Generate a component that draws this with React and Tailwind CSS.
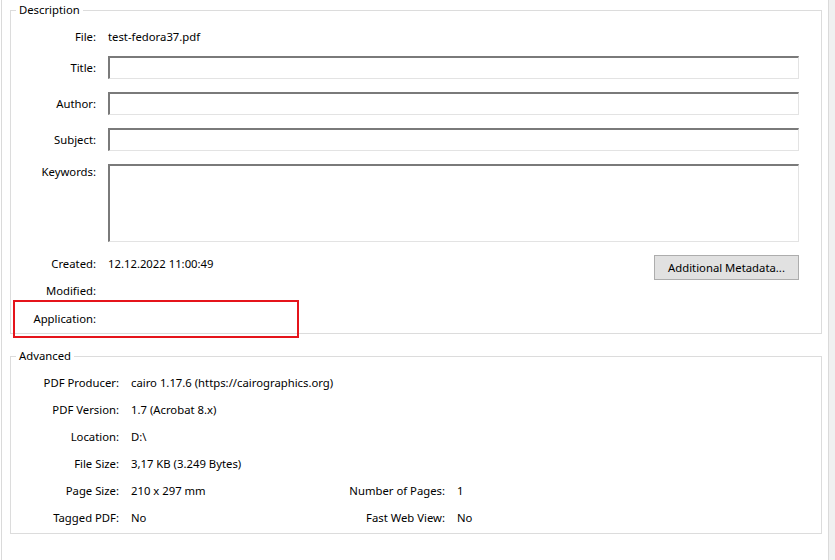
import React from 'react';

const font = { fontFamily: '"Noto Sans", "Liberation Sans", sans-serif' };

const Field = ({ tall }) => (
    <div className={`flex-1 bg-white border-t-2 border-l-2 border-t-[#7a7a7a] border-l-[#7a7a7a] border-b border-r border-b-[#e3e3e3] border-r-[#e3e3e3] ${tall ? 'h-[78px]' : 'h-[23px]'}`} />
);

const InputRow = ({ label, mt, tall }) => (
    <div className={`flex ${tall ? 'items-start' : 'items-center'} ${mt}`}>
        <span className="w-[85px] text-right">{label}</span>
        <div className="ml-[12px] mr-[22px] flex flex-1">
            <Field tall={tall} />
        </div>
    </div>
);

const InfoRow = ({ label, value, label2, value2 }) => (
    <div className="flex items-center h-[27px]">
        <span className="w-[108px] text-right">{label}</span>
        <span className={`ml-[12px] ${label2 ? 'w-[169px]' : ''}`}>{value}</span>
        {label2 && (
            <>
                <span className="w-[145px] text-right">{label2}</span>
                <span className="ml-[12px]">{value2}</span>
            </>
        )}
    </div>
);

const App = () => {
    return (
        <div className="flex w-[835px] h-[560px] bg-white text-[11.3px] leading-[16px] text-black" style={font}>
            <div className="relative ml-[1px] w-[828px] h-full border-x border-[#dadada] bg-white">
                {/* description group */}
                <fieldset className="mt-[2px] ml-[8px] mr-[6px] border border-[#dcdcdc] pb-[6px]">
                    <legend className="ml-[5px] px-[3px]">Description</legend>

                    <div className="flex items-center mt-[11px]">
                        <span className="w-[85px] text-right">File:</span>
                        <span className="ml-[12px]">test-fedora37.pdf</span>
                    </div>
                    <InputRow label="Title:" mt="mt-[11px]" />
                    <InputRow label="Author:" mt="mt-[13px]" />
                    <InputRow label="Subject:" mt="mt-[13px]" />
                    <InputRow label="Keywords:" mt="mt-[13px]" tall />

                    <div className="flex mt-[14px]">
                        <div className="flex flex-col">
                            <span className="w-[85px] text-right">Created:</span>
                            <span className="w-[85px] text-right mt-[11px]">Modified:</span>
                            <span className="w-[85px] text-right mt-[12px]">Application:</span>
                        </div>
                        <span className="ml-[12px]">12.12.2022 11:00:49</span>
                        <button className="ml-auto mr-[22px] -mt-px h-[25px] w-[145px] bg-[#e1e1e1] border border-[#adadad] text-[11.3px]">
                            Additional Metadata...
                        </button>
                    </div>
                </fieldset>

                {/* advanced group */}
                <fieldset className="mt-[14px] ml-[8px] mr-[6px] border border-[#dcdcdc] pt-[5px] pb-[2px]">
                    <legend className="ml-[5px] px-[3px]">Advanced</legend>
                    <InfoRow label="PDF Producer:" value="cairo 1.17.6 (https://cairographics.org)" />
                    <InfoRow label="PDF Version:" value="1.7 (Acrobat 8.x)" />
                    <InfoRow label="Location:" value="D:\" />
                    <InfoRow label="File Size:" value="3,17 KB (3.249 Bytes)" />
                    <InfoRow label="Page Size:" value="210 x 297 mm" label2="Number of Pages:" value2="1" />
                    <InfoRow label="Tagged PDF:" value="No" label2="Fast Web View:" value2="No" />
                </fieldset>

                {/* highlight box */}
                <div className="absolute left-[11px] top-[300px] w-[286px] h-[38px] border-2 border-[#e5141b]" />
            </div>
            <div className="flex-1 bg-[#f0f0f0]" />
        </div>
    );
};

export default App;
